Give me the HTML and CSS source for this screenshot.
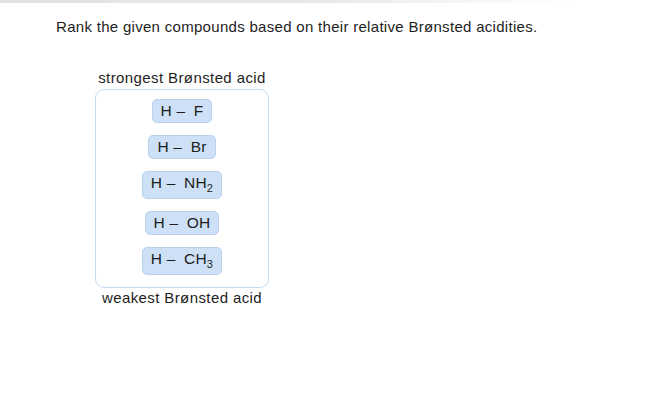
FILE: index.html
```html
<!DOCTYPE html>
<html>
<head>
<meta charset="utf-8">
<link rel="stylesheet" href="styles.css">
</head>
<body>
<div class="topline"></div>
<p class="question">Rank the given compounds based on their relative Brønsted acidities.</p>
<div class="ranking">
  <div class="label">strongest Brønsted acid</div>
  <div class="box">
    <div class="pill">H <span class="dash">–</span> F</div>
    <div class="pill">H <span class="dash">–</span> Br</div>
    <div class="pill tall">H <span class="dash">–</span> NH<sub>2</sub></div>
    <div class="pill">H <span class="dash">–</span> OH</div>
    <div class="pill tall">H <span class="dash">–</span> CH<sub>3</sub></div>
  </div>
  <div class="label">weakest Brønsted acid</div>
</div>
</body>
</html>
```
FILE: styles.css
```css
html, body {
  margin: 0;
  padding: 0;
  background: #fff;
}
body {
  font-family: "Liberation Sans", Arial, sans-serif;
  color: #1e1e1e;
  width: 649px;
  height: 413px;
  overflow: hidden;
}
.topline {
  height: 3px;
  width: 570px;
  background: linear-gradient(to right, #e2e2e2 0%, #e8e8e8 55%, #fff 100%);
}
.question {
  margin: 15px 0 0 56px;
  font-size: 15px;
  line-height: 18px;
  letter-spacing: 0.3px;
}
.ranking {
  margin: 33px 0 0 95px;
  width: 174px;
  display: flex;
  flex-direction: column;
  align-items: center;
}
.label {
  font-size: 15px;
  line-height: 18px;
  letter-spacing: 0.4px;
  white-space: nowrap;
}
.box {
  margin-top: 2px;
  box-sizing: border-box;
  width: 174px;
  height: 199px;
  border: 1px solid #c6dcf2;
  border-radius: 9px;
  padding: 9px 0 0;
  display: flex;
  flex-direction: column;
  align-items: center;
  gap: 12px;
}
.box + .label {
  margin-top: 1px;
}
.pill {
  box-sizing: border-box;
  height: 24px;
  background: #cde0f6;
  border: 1px solid #b8d2ef;
  border-radius: 5px;
  font-size: 15.5px;
  line-height: 22px;
  letter-spacing: 0.2px;
  padding: 0 8px;
  white-space: nowrap;
}
.pill.tall {
  height: 28px;
  padding-bottom: 4px;
}
.dash {
  margin-right: 4px;
}
.pill sub {
  font-size: 11px;
  line-height: 0;
  vertical-align: -4px;
}
```
